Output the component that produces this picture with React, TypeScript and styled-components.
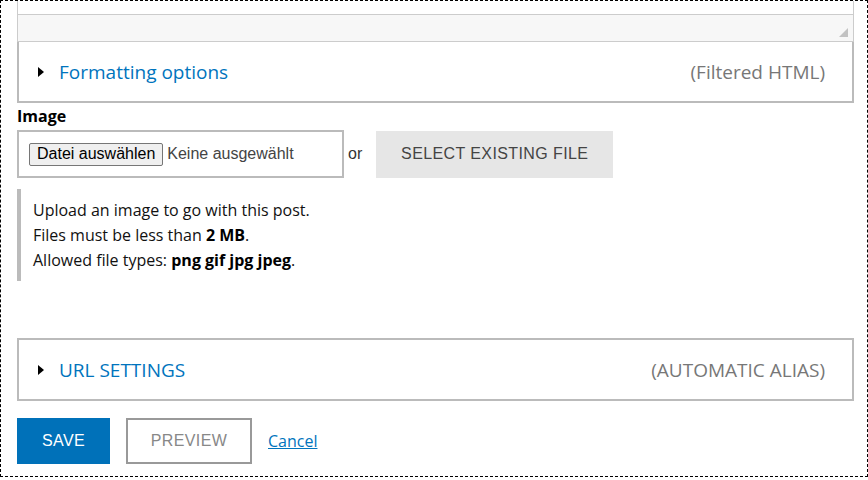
import React from "react";
import styled, { createGlobalStyle } from "styled-components";

const GlobalStyle = createGlobalStyle`
  html, body {
    margin: 0;
    padding: 0;
    background: #fff;
  }
  body {
    font-family: "Open Sans", "Liberation Sans", sans-serif;
    color: #222;
  }
`;

const Frame = styled.div`
  box-sizing: border-box;
  width: 868px;
  height: 477px;
  border: 1px dashed #000;
  padding: 0 13px 0 16px;
  overflow: hidden;
`;

const Editor = styled.div`
  border: 1px solid #ccc;
  border-top: 0;
  border-bottom: 0;
`;

const EditorBody = styled.div`
  height: 13px;
  background: #fff;
  border-bottom: 1px solid #ccc;
`;

const EditorFoot = styled.div`
  position: relative;
  height: 26px;
  background: #f7f7f7;
  border-bottom: 1px solid #ccc;
`;

const Grip = styled.span`
  position: absolute;
  right: 5px;
  bottom: 4px;
  width: 0;
  height: 0;
  border-left: 9px solid transparent;
  border-bottom: 9px solid #c2c2c2;
`;

const Details = styled.div<{ $noTop?: boolean }>`
  box-sizing: border-box;
  height: ${(p) => (p.$noTop ? "61px" : "63px")};
  border: 2px solid #bbb;
  border-top: ${(p) => (p.$noTop ? "0" : "2px solid #bbb")};
  display: flex;
  align-items: center;
  padding: 0 27px 0 19px;
  margin-top: ${(p) => (p.$noTop ? "0" : "57px")};
`;

const Arrow = styled.span`
  width: 0;
  height: 0;
  border-top: 5px solid transparent;
  border-bottom: 5px solid transparent;
  border-left: 6px solid #000;
  margin-right: 15px;
`;

const Summary = styled.span`
  flex: 1;
  font-size: 19px;
  color: #0074bd;
`;

const Note = styled.span`
  font-size: 19px;
  color: #777;
`;

const Label = styled.div`
  font-weight: 700;
  font-size: 16px;
  color: #000;
  line-height: 22px;
  margin-top: 2px;
`;

const FileRow = styled.div`
  display: flex;
  align-items: center;
  margin-top: 3px;
`;

const FileBox = styled.div`
  box-sizing: border-box;
  width: 327px;
  height: 48px;
  border: 2px solid #bbb;
  display: flex;
  align-items: center;
  padding-left: 10px;
  font-family: "Liberation Sans", Arial, sans-serif;
  font-size: 16px;
  color: #444;
`;

const FakeButton = styled.span`
  box-sizing: border-box;
  height: 23px;
  padding: 0 7px;
  background: #efefef;
  border: 1px solid #767676;
  border-radius: 2px;
  color: #000;
  display: flex;
  align-items: center;
  margin-right: 4px;
`;

const Or = styled.span`
  font-family: "Liberation Sans", Arial, sans-serif;
  font-size: 16px;
  color: #333;
  margin: 0 14px 0 4px;
`;

const GreyButton = styled.button`
  box-sizing: border-box;
  height: 47px;
  width: 237px;
  border: 0;
  background: #e6e6e6;
  color: #444;
  font-family: "Liberation Sans", Arial, sans-serif;
  font-size: 16px;
  letter-spacing: 0.4px;
  text-transform: uppercase;
  padding: 0;
`;

const Description = styled.div`
  box-sizing: border-box;
  margin-top: 11px;
  border-left: 4px solid #bbb;
  padding: 9px 0 0 12px;
  height: 92px;
  font-size: 16px;
  line-height: 25px;
  color: #111;

  b {
    font-weight: 700;
    color: #000;
  }
`;

const Actions = styled.div`
  display: flex;
  align-items: center;
  margin-top: 17px;
`;

const Button = styled.button<{ $primary?: boolean }>`
  box-sizing: border-box;
  height: 46px;
  width: ${(p) => (p.$primary ? "93px" : "126px")};
  padding: 0;
  font-family: "Liberation Sans", Arial, sans-serif;
  font-size: 16px;
  letter-spacing: 0.4px;
  text-transform: uppercase;
  background: ${(p) => (p.$primary ? "#0071b9" : "#fff")};
  color: ${(p) => (p.$primary ? "#fff" : "#888")};
  border: ${(p) => (p.$primary ? "0" : "2px solid #999")};
  margin-right: 16px;
`;

const CancelLink = styled.a`
  font-size: 16px;
  color: #0074bd;
  text-decoration: underline;
`;

export default function App() {
  return (
    <>
      <GlobalStyle />
      <Frame>
        <Editor>
          <EditorBody />
          <EditorFoot>
            <Grip />
          </EditorFoot>
        </Editor>
        <Details $noTop>
          <Arrow />
          <Summary>Formatting options</Summary>
          <Note>(Filtered HTML)</Note>
        </Details>
        <Label>Image</Label>
        <FileRow>
          <FileBox>
            <FakeButton>Datei auswählen</FakeButton>
            Keine ausgewählt
          </FileBox>
          <Or>or</Or>
          <GreyButton>Select existing file</GreyButton>
        </FileRow>
        <Description>
          Upload an image to go with this post.
          <br />
          Files must be less than <b>2 MB</b>.
          <br />
          Allowed file types: <b>png gif jpg jpeg</b>.
        </Description>
        <Details>
          <Arrow />
          <Summary>URL SETTINGS</Summary>
          <Note>(AUTOMATIC ALIAS)</Note>
        </Details>
        <Actions>
          <Button $primary>Save</Button>
          <Button>Preview</Button>
          <CancelLink href="#">Cancel</CancelLink>
        </Actions>
      </Frame>
    </>
  );
}
